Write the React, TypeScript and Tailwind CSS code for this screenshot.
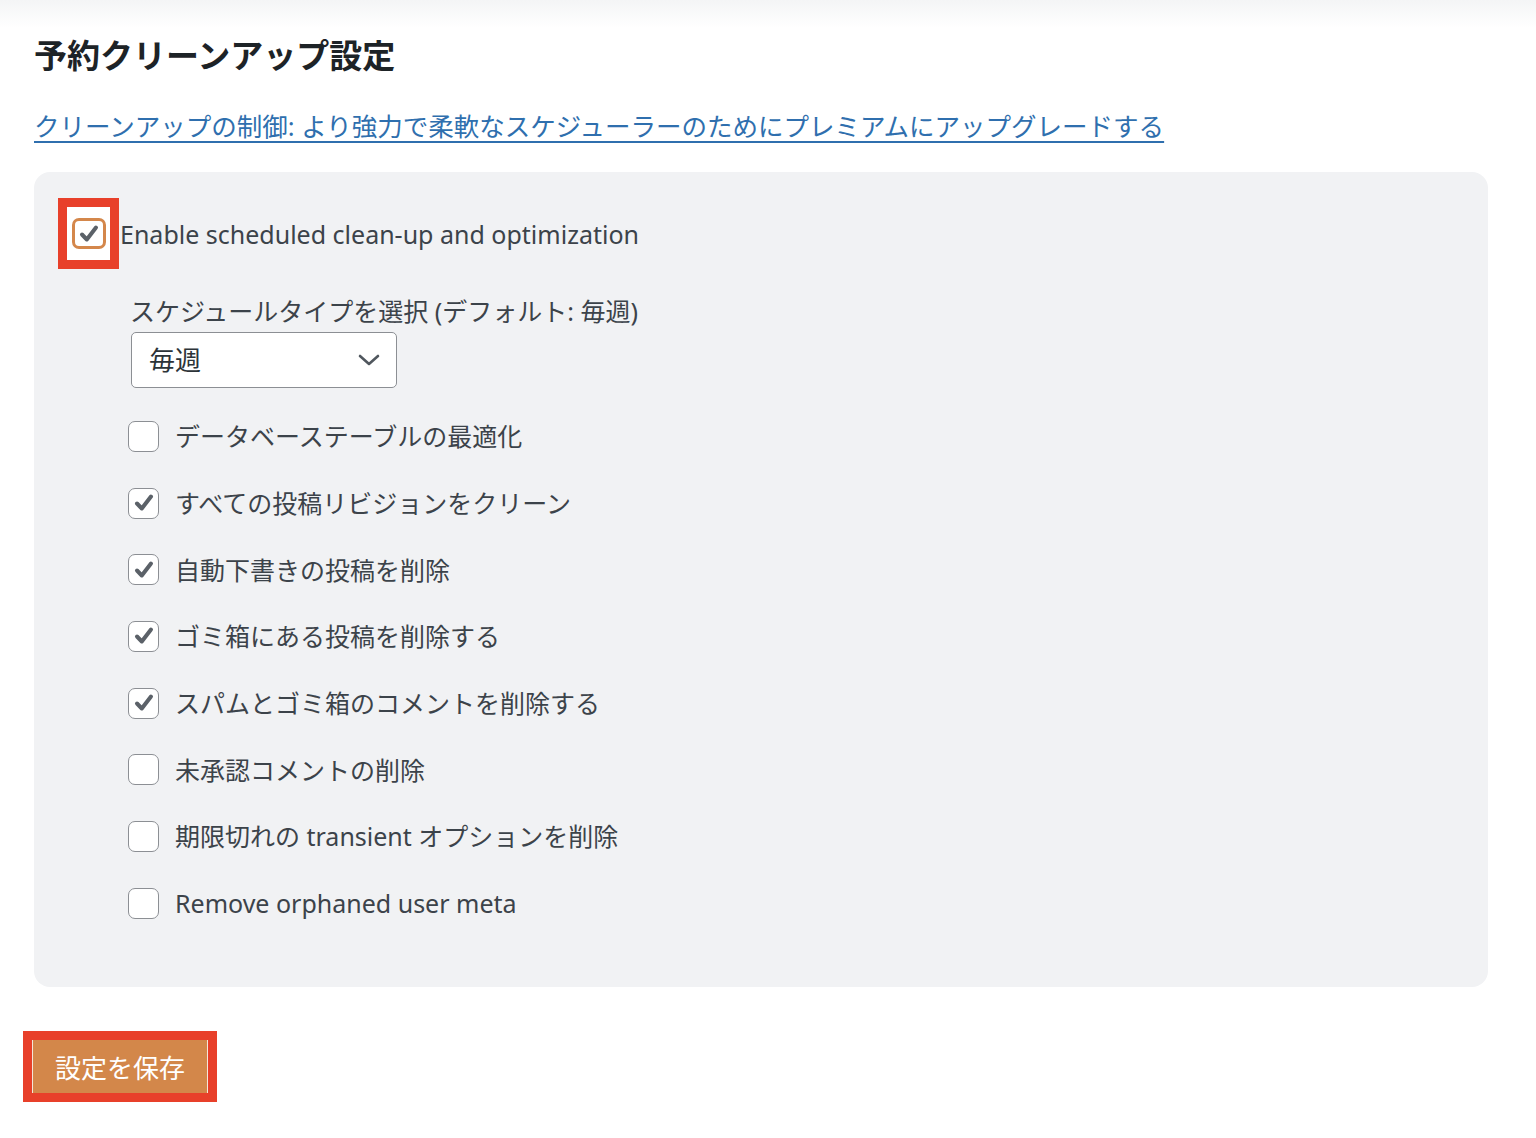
import React from 'react';

const FONT = { fontFamily: '"Noto Sans", "Noto Sans CJK JP", sans-serif' };

type Option = { label: string; checked: boolean };

const options: Option[] = [
  { label: 'データベーステーブルの最適化', checked: false },
  { label: 'すべての投稿リビジョンをクリーン', checked: true },
  { label: '自動下書きの投稿を削除', checked: true },
  { label: 'ゴミ箱にある投稿を削除する', checked: true },
  { label: 'スパムとゴミ箱のコメントを削除する', checked: true },
  { label: '未承認コメントの削除', checked: false },
  { label: '期限切れの transient オプションを削除', checked: false },
  { label: 'Remove orphaned user meta', checked: false },
];

function Check() {
  return (
    <svg width="22" height="22" viewBox="0 0 22 22" fill="none">
      <path d="M4 11.5 L8.8 16.5 L18 4.5" stroke="#5b6168" strokeWidth="4" strokeLinecap="round" strokeLinejoin="round" />
    </svg>
  );
}

function Box({ checked, className }: { checked: boolean; className?: string }) {
  return (
    <span
      className={`flex items-center justify-center bg-white rounded-[7px] ${className ?? 'w-[31px] h-[31px] border-[1.5px] border-[#8c8f94]'}`}
    >
      {checked && <Check />}
    </span>
  );
}

export default function App() {
  const [items, setItems] = React.useState(options);
  const [enabled, setEnabled] = React.useState(true);

  return (
    <div className="min-h-screen bg-white text-[#3c434a]" style={FONT}>
      <div className="h-[28px] bg-gradient-to-b from-[#f4f5f6] to-white" />

      <div className="pl-[34px] pr-[48px]">
        <h1 className="mt-[8px] h-[40px] leading-[40px] text-[33px] font-bold text-[#1d2327]">予約クリーンアップ設定</h1>

        <a
          href="#"
          className="block w-fit mt-[32px] h-[36px] leading-[36px] text-[25.5px] text-[#2f6fae] underline decoration-[2px] underline-offset-[5px]"
        >
          クリーンアップの制御: より強力で柔軟なスケジューラーのためにプレミアムにアップグレードする
        </a>

        <div className="mt-[28px] bg-[#f1f2f4] rounded-[16px] pt-[26px] pl-[24px] pb-[50px]">
          <label className="flex items-center cursor-pointer" onClick={() => setEnabled(!enabled)}>
            <span className="flex items-center justify-center w-[61px] h-[71px] border-[9px] border-[#e8402a] bg-white">
              <Box checked={enabled} className="w-[34px] h-[31px] border-[3px] border-[#d4874b]" />
            </span>
            <span className="text-[25px] leading-[32px] pl-[1px]">Enable scheduled clean-up and optimization</span>
          </label>

          <div className="pl-[72px]">
            <div className="mt-[26px] text-[25px] leading-[32px]">スケジュールタイプを選択 (デフォルト: 毎週)</div>
            <div className="mt-[5px] ml-[1px] w-[266px] h-[56px] bg-white border-[1.5px] border-[#8c8f94] rounded-[5px] flex items-center justify-between pl-[17px] pr-[15px]">
              <span className="text-[26px] text-[#2c3338]">毎週</span>
              <svg width="24" height="14" viewBox="0 0 24 14" fill="none">
                <path d="M3 3 L12 11 L21 3" stroke="#50575e" strokeWidth="2.6" strokeLinecap="round" strokeLinejoin="round" />
              </svg>
            </div>

            <div className="mt-[15px] -ml-[2px]">
              {items.map((it, i) => (
                <label
                  key={i}
                  className="flex items-center h-[66.7px] gap-[16px] cursor-pointer"
                  onClick={() => setItems(items.map((x, j) => (j === i ? { ...x, checked: !x.checked } : x)))}
                >
                  <Box checked={it.checked} />
                  <span className="text-[25px] leading-[32px]">{it.label}</span>
                </label>
              ))}
            </div>
          </div>
        </div>

        <div className="mt-[44px] -ml-[11px] w-fit border-[9px] border-[#e8402a]">
          <button className="h-[53px] px-[22px] pt-[4px] bg-[#d3874a] text-white text-[26px] leading-[49px] border-l-[1.5px] border-r-[1.5px] border-[#f4e6da]">
            設定を保存
          </button>
        </div>
      </div>
    </div>
  );
}
